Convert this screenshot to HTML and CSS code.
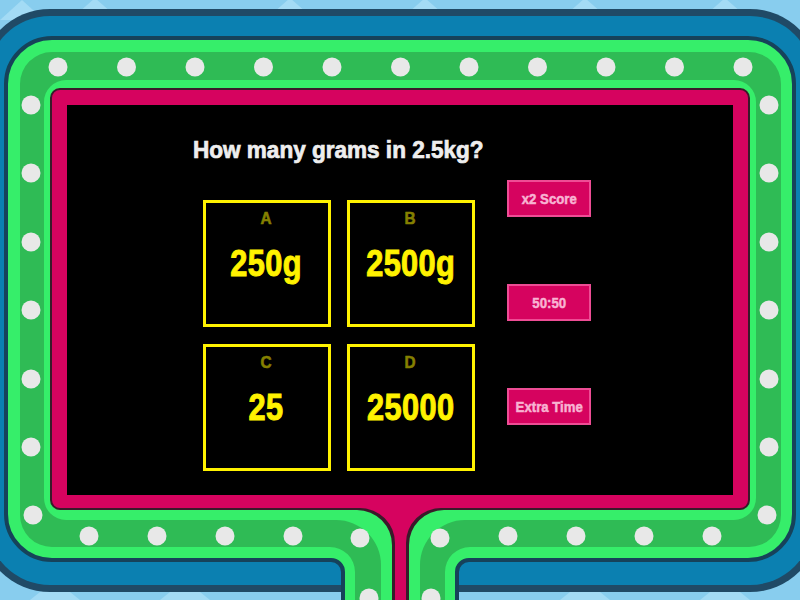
FILE: index.html
```html
<!DOCTYPE html>
<html lang="en">
<head>
<meta charset="utf-8">
<title>Quiz</title>
<link rel="stylesheet" href="styles.css">
</head>
<body>
<div class="stage">
  <svg class="frame" width="800" height="600" viewBox="0 0 800 600" aria-hidden="true">
    <rect x="0" y="0" width="800" height="600" fill="#88cdee"/>
    <g fill="#a3dbf5">
      <polygon points="0,20 22,0 44,20"/>
      <polygon points="70,20 95,-2 120,20"/>
      <polygon points="265,20 290,-2 315,20"/>
      <polygon points="400,20 425,-2 450,20"/>
      <polygon points="560,20 585,-2 610,20"/>
      <polygon points="700,20 725,-2 750,20"/>
      <polygon points="30,600 55,580 80,600"/>
      <polygon points="160,600 185,580 210,600"/>
      <polygon points="560,600 585,580 610,600"/>
      <polygon points="700,600 725,580 750,600"/>
    </g>
    <rect x="-20" y="9" width="840" height="583" rx="70" fill="#204a66"/>
    <rect x="-13" y="16" width="826" height="569" rx="63" fill="#0b80b1"/>
    <path d="M 52 38 H 748 A 46 46 0 0 1 794 84 V 514 A 46 46 0 0 1 748 560 H 469 A 12 12 0 0 0 457 572 V 610 H 343 V 572 A 12 12 0 0 0 331 560 H 52 A 46 46 0 0 1 6 514 V 84 A 46 46 0 0 1 52 38 Z" fill="#36ee6a" stroke="#16425a" stroke-width="4"/>
    <path d="M 52 52 H 749 A 32 32 0 0 1 781 84 V 515 A 32 32 0 0 1 749 547 H 470 A 25 25 0 0 0 445 572 V 610 H 355 V 572 A 25 25 0 0 0 330 547 H 52 A 32 32 0 0 1 20 515 V 84 A 32 32 0 0 1 52 52 Z" fill="#2fbb55"/>
    <path d="M 66 80 H 734 A 22 22 0 0 1 756 102 V 498 A 22 22 0 0 1 734 520 H 465 A 45 45 0 0 0 420 565 V 610 H 381 V 565 A 45 45 0 0 0 336 520 H 66 A 22 22 0 0 1 44 498 V 102 A 22 22 0 0 1 66 80 Z" fill="#36ee6a"/>
    <path d="M 60 88 H 740 A 10 10 0 0 1 750 98 V 500 A 10 10 0 0 1 740 510 H 444 A 35 35 0 0 0 409 545 V 610 H 392 V 545 A 35 35 0 0 0 357 510 H 60 A 10 10 0 0 1 50 500 V 98 A 10 10 0 0 1 60 88 Z" fill="#3a1a2a"/>
    <path d="M 60 90 H 740 A 8 8 0 0 1 748 98 V 500 A 8 8 0 0 1 740 508 H 441 A 35 35 0 0 0 406 543 V 610 H 395 V 543 A 35 35 0 0 0 360 508 H 60 A 8 8 0 0 1 52 500 V 98 A 8 8 0 0 1 60 90 Z" fill="#d6035f"/>
    <g fill="#e8e8e8">
      <circle cx="58" cy="67" r="9.5"/>
      <circle cx="126.5" cy="67" r="9.5"/>
      <circle cx="195" cy="67" r="9.5"/>
      <circle cx="263.5" cy="67" r="9.5"/>
      <circle cx="332" cy="67" r="9.5"/>
      <circle cx="400.5" cy="67" r="9.5"/>
      <circle cx="469" cy="67" r="9.5"/>
      <circle cx="537.5" cy="67" r="9.5"/>
      <circle cx="606" cy="67" r="9.5"/>
      <circle cx="674.5" cy="67" r="9.5"/>
      <circle cx="743" cy="67" r="9.5"/>
      <circle cx="31" cy="105" r="9.5"/>
      <circle cx="31" cy="173" r="9.5"/>
      <circle cx="31" cy="242" r="9.5"/>
      <circle cx="31" cy="310" r="9.5"/>
      <circle cx="31" cy="379" r="9.5"/>
      <circle cx="31" cy="447" r="9.5"/>
      <circle cx="33" cy="515" r="9.5"/>
      <circle cx="769" cy="105" r="9.5"/>
      <circle cx="769" cy="173" r="9.5"/>
      <circle cx="769" cy="242" r="9.5"/>
      <circle cx="769" cy="310" r="9.5"/>
      <circle cx="769" cy="379" r="9.5"/>
      <circle cx="769" cy="447" r="9.5"/>
      <circle cx="767" cy="515" r="9.5"/>
      <circle cx="89" cy="536" r="9.5"/>
      <circle cx="157" cy="536" r="9.5"/>
      <circle cx="225" cy="536" r="9.5"/>
      <circle cx="293" cy="536" r="9.5"/>
      <circle cx="360" cy="538" r="9.5"/>
      <circle cx="440" cy="538" r="9.5"/>
      <circle cx="508" cy="536" r="9.5"/>
      <circle cx="576" cy="536" r="9.5"/>
      <circle cx="644" cy="536" r="9.5"/>
      <circle cx="712" cy="536" r="9.5"/>
      <circle cx="369" cy="598" r="9.5"/>
      <circle cx="431" cy="598" r="9.5"/>
    </g>
  </svg>
  <main class="screen">
    <section class="quiz">
      <h1 class="question">How many grams in 2.5kg?</h1>
      <div class="answers">
        <div class="answer"><span class="letter">A</span><span class="value">250g</span></div>
        <div class="answer"><span class="letter">B</span><span class="value">2500g</span></div>
        <div class="answer"><span class="letter">C</span><span class="value">25</span></div>
        <div class="answer"><span class="letter">D</span><span class="value">25000</span></div>
      </div>
    </section>
    <aside class="powerups">
      <button class="powerup"><span class="label">x2 Score</span></button>
      <button class="powerup"><span class="label">50:50</span></button>
      <button class="powerup"><span class="label">Extra Time</span></button>
    </aside>
  </main>
</div>
</body>
</html>
```

FILE: styles.css
```css
html, body {
  margin: 0;
  padding: 0;
  background: #88cdee;
}

.stage {
  display: grid;
  width: 800px;
  height: 600px;
  overflow: hidden;
}

.frame,
.screen {
  grid-area: 1 / 1;
}

.frame {
  display: block;
}

.screen {
  align-self: start;
  justify-self: start;
  box-sizing: border-box;
  width: 666px;
  height: 390px;
  margin: 105px 0 0 67px;
  padding: 31px 0 0 135px;
  background: #000;
  display: flex;
  align-items: flex-start;
}

.quiz {
  width: 273px;
  display: flex;
  flex-direction: column;
  align-items: center;
}

.question {
  margin: 0;
  white-space: nowrap;
  font-family: "Liberation Sans", Arial, sans-serif;
  font-weight: bold;
  font-size: 23px;
  line-height: 28px;
  color: #eeeeee;
  -webkit-text-stroke: 0.7px #eeeeee;
  transform: scaleX(0.98);
}

.answers {
  margin-top: 36px;
  display: grid;
  grid-template-columns: 128px 128px;
  grid-auto-rows: 127px;
  column-gap: 16px;
  row-gap: 17px;
}

.answer {
  box-sizing: border-box;
  border: 3px solid #fff200;
  display: flex;
  flex-direction: column;
  align-items: center;
  font-family: "Liberation Sans", Arial, sans-serif;
  font-weight: bold;
}

.letter {
  display: inline-block;
  padding-top: 6px;
  font-size: 17px;
  line-height: 20px;
  color: #858000;
  -webkit-text-stroke: 0.6px #858000;
  transform: scaleX(0.9);
}

.value {
  display: inline-block;
  margin-top: 13px;
  font-size: 37px;
  line-height: 44px;
  letter-spacing: 0.5px;
  color: #fff200;
  -webkit-text-stroke: 1px #fff200;
  transform: scaleX(0.83);
}

.powerups {
  margin: 44px 0 0 32px;
  display: flex;
  flex-direction: column;
  gap: 67px;
}

.powerup {
  box-sizing: border-box;
  width: 84px;
  height: 37px;
  padding: 0;
  background: #d6035f;
  border: 2px solid #ee4d95;
  color: #f8b3d2;
  font-family: "Liberation Sans", Arial, sans-serif;
  font-weight: bold;
  font-size: 15px;
  white-space: nowrap;
  display: flex;
  align-items: center;
  justify-content: center;
}

.label {
  display: inline-block;
  -webkit-text-stroke: 0.5px #f8b3d2;
  transform: scaleX(0.88);
}
```
